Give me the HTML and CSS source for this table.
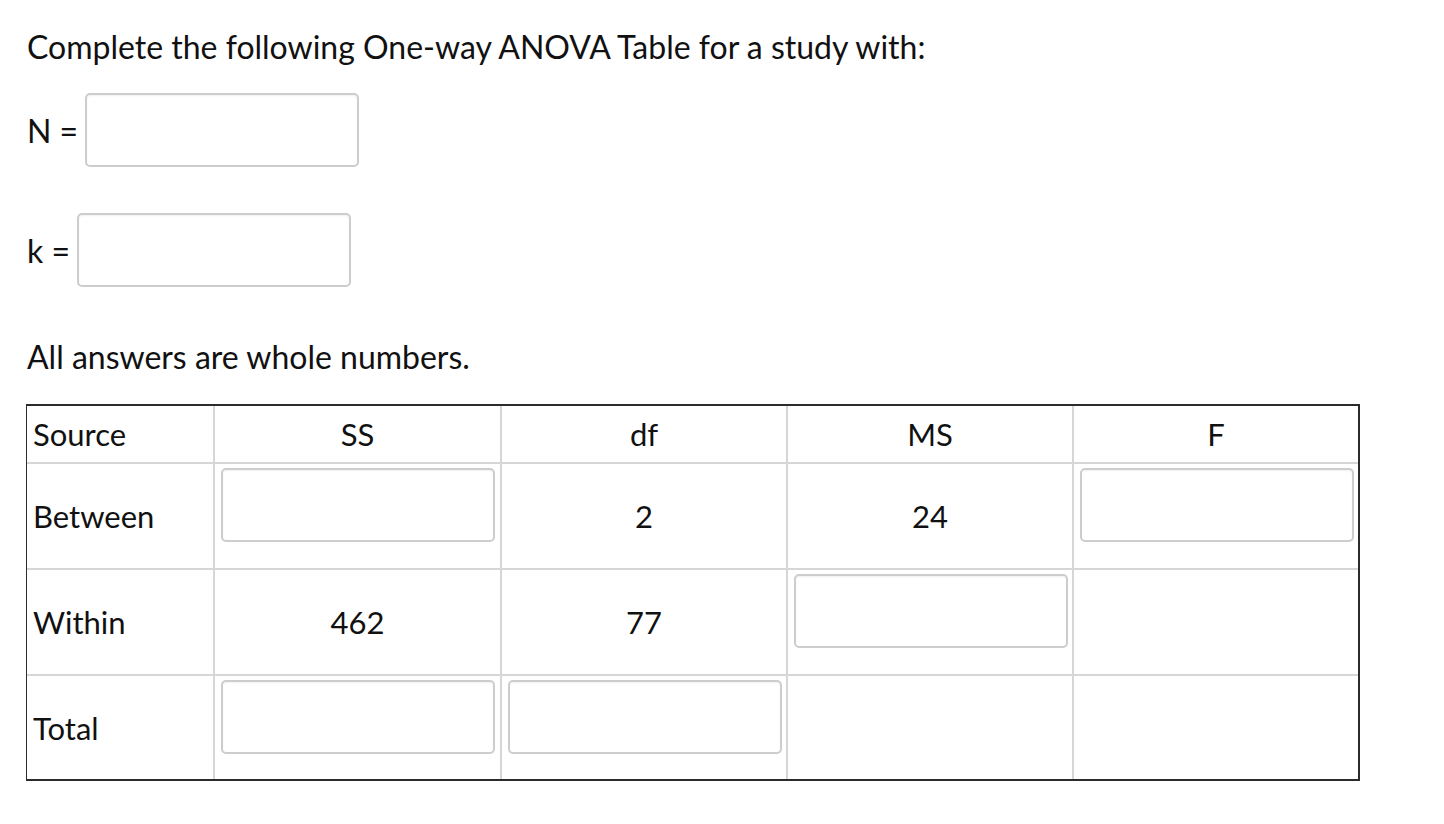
FILE: index.html
```html
<!DOCTYPE html>
<html lang="en">
<head>
<meta charset="utf-8">
<title>One-way ANOVA</title>
<link rel="stylesheet" href="styles.css">
</head>
<body>
<div class="page">
  <p class="prompt">Complete the following One-way ANOVA Table for a study with:</p>
  <div class="field field-n"><span class="lbl">N =</span><input class="answer" type="text" aria-label="N"></div>
  <div class="field field-k"><span class="lbl">k =</span><input class="answer" type="text" aria-label="k"></div>
  <p class="note">All answers are whole numbers.</p>
  <table class="anova">
    <colgroup>
      <col class="c-src"><col class="c-ss"><col class="c-val"><col class="c-val"><col class="c-last">
    </colgroup>
    <tr class="head">
      <td class="src">Source</td><td>SS</td><td>df</td><td>MS</td><td class="last">F</td>
    </tr>
    <tr class="row">
      <td class="src">Between</td>
      <td class="in"><input class="answer" type="text" aria-label="SS between"></td>
      <td>2</td>
      <td>24</td>
      <td class="in last"><input class="answer" type="text" aria-label="F"></td>
    </tr>
    <tr class="row">
      <td class="src">Within</td>
      <td>462</td>
      <td>77</td>
      <td class="in"><input class="answer" type="text" aria-label="MS within"></td>
      <td class="last"></td>
    </tr>
    <tr class="row end">
      <td class="src">Total</td>
      <td class="in"><input class="answer" type="text" aria-label="SS total"></td>
      <td class="in"><input class="answer" type="text" aria-label="df total"></td>
      <td></td>
      <td class="last"></td>
    </tr>
  </table>
</div>
</body>
</html>
```
FILE: styles.css
```css
html, body {
  margin: 0;
  padding: 0;
  background: #fff;
}
body {
  font-family: Lato, "Open Sans", "Liberation Sans", sans-serif;
  color: #111;
}
.page {
  padding: 27px 0 0 26px;
}
.prompt {
  margin: 0 0 0 1px;
  font-size: 32px;
  line-height: 39px;
}
.field {
  display: flex;
  align-items: center;
  margin-left: 1px;
  font-size: 32px;
}
.field-n {
  margin-top: 27px;
}
.field-k {
  margin-top: 46px;
}
.field .lbl {
  margin-right: 7px;
}
.answer {
  box-sizing: border-box;
  width: 274px;
  height: 74px;
  border: 2px solid #cdcdcd;
  border-radius: 5px;
  background: #fff;
  box-shadow: inset 0 1px 2px rgba(0, 0, 0, 0.06);
  margin: 0;
  padding: 0;
  display: block;
}
.note {
  margin: 50px 0 0 1px;
  font-size: 32px;
  line-height: 40px;
}
.anova {
  margin-top: 27px;
  border-collapse: separate;
  border-spacing: 0;
  table-layout: fixed;
  width: 1334px;
  border-top: 2px solid #2b2b2b;
  border-bottom: 2px solid #2b2b2b;
  border-left: 1px solid #2b2b2b;
  border-right: 2px solid #2b2b2b;
  font-size: 31px;
}
.c-src { width: 188px; }
.c-ss { width: 287px; }
.c-val { width: 286px; }
.c-last { width: 284px; }
.anova td {
  border-right: 2px solid #d6d6d6;
  border-bottom: 2px solid #d6d6d6;
  text-align: center;
  vertical-align: middle;
  padding: 0;
  box-sizing: border-box;
}
.anova td.last {
  border-right: 0;
}
.anova tr.end td {
  border-bottom: 0;
}
.anova tr.head td {
  height: 58px;
}
.anova tr.row td {
  height: 106px;
}
.anova tr.end td {
  height: 103px;
}
.anova td.src {
  text-align: left;
  padding-left: 6px;
}
.anova td.in {
  vertical-align: top;
  padding: 4px 0 0 6px;
}
```
